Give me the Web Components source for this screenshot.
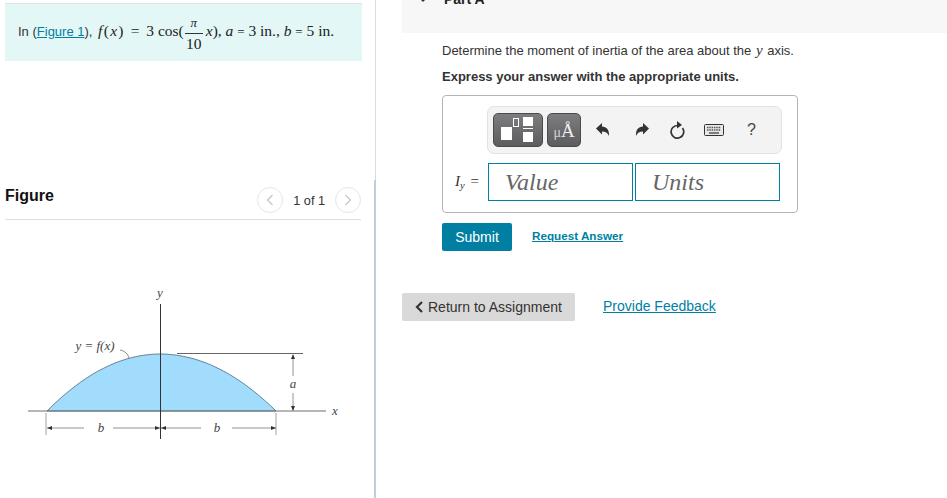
<!DOCTYPE html>
<html>
<head>
<meta charset="utf-8">
<title>Part A</title>
<style>
    html, body { margin: 0; height: 100%; background: #fff; overflow: hidden; }
    body { font-family: "Liberation Sans", Arial, sans-serif; color: #333; }
</style>
</head>
<body>
<problem-page>
    <left-pane slot="left">
        <intro-note>In (<a href="#">Figure 1</a>), <math-text></math-text></intro-note>
        <figure-head></figure-head>
        <figure-drawing></figure-drawing>
    </left-pane>
    <part-pane slot="right"></part-pane>
</problem-page>

<script>
class ProblemPage extends HTMLElement {
    constructor() {
        super();
        this.attachShadow({ mode: "open" });
    }

    connectedCallback() {
        this.shadowRoot.innerHTML = `
            <style>
                :host { display: flex; height: 498px; overflow: hidden; }
                .left { flex: 0 0 374px; }
                .divider {
                    flex: 0 0 2px;
                    background:
                        linear-gradient(90deg, transparent 1px, #d3dde8 1px) top / 100% 180px no-repeat,
                        linear-gradient(#bdd0e2, #bdd0e2) bottom / 100% 318px no-repeat;
                }
                .right { flex: 1; padding-left: 26px; min-width: 0; }
            </style>
            <div class="left"><slot name="left"></slot></div>
            <div class="divider"></div>
            <div class="right"><slot name="right"></slot></div>
        `;
    }
}

class LeftPane extends HTMLElement {
    constructor() {
        super();
        this.attachShadow({ mode: "open" });
    }

    connectedCallback() {
        this.shadowRoot.innerHTML = `
            <style>
                :host { display: block; padding: 3px 0 0 5px; }
            </style>
            <slot></slot>
        `;
    }
}

class IntroNote extends HTMLElement {
    constructor() {
        super();
        this.attachShadow({ mode: "open" });
    }

    connectedCallback() {
        this.shadowRoot.innerHTML = `
            <style>
                :host {
                    display: flex;
                    align-items: center;
                    box-sizing: border-box;
                    height: 58px;
                    width: 357px;
                    padding: 0 0 3px 13px;
                    background: #e3f7f6;
                    border-top: 1px solid #dfe3e8;
                    font-size: 13px;
                    color: #333;
                }
                .line { display: flex; align-items: center; white-space: pre; }
                ::slotted(a) { color: #007fa3; text-decoration: underline; }
            </style>
            <div class="line"><slot></slot></div>
        `;
    }
}

class MathText extends HTMLElement {
    constructor() {
        super();
        this.attachShadow({ mode: "open" });
    }

    connectedCallback() {
        this.shadowRoot.innerHTML = `
            <style>
                :host {
                    display: inline-flex;
                    align-items: center;
                    font-family: "Liberation Serif", "DejaVu Serif", serif;
                    font-size: 15.500px;
                    color: #222;
                    white-space: pre;
                    margin-left: 2px;
                }
                i { font-style: italic; }
                .wide { letter-spacing: 1.300px; }
                .big-eq { margin: 0 3px 0 2px; }
                .eq { font-size: 13px; }
                .frac {
                    display: inline-flex;
                    flex-direction: column;
                    align-items: center;
                    box-sizing: border-box;
                    width: 18px;
                    margin: 0 3px 0 1px;
                    padding-top: 6px;
                }
                .frac i {
                    border-bottom: 1px solid #333;
                    width: 100%;
                    text-align: center;
                    font-size: 13px;
                    line-height: 15px;
                    padding-bottom: 3px;
                }
                .frac span { line-height: 19px; }
            </style>
            <span><span class="wide"><i>f</i>(<i>x</i>)</span> <span class="big-eq">=</span> 3 cos(</span>
            <span class="frac"><i>π</i><span>10</span></span>
            <span><i>x</i>), <i>a</i> <span class="eq">=</span> 3 in., <i>b</i> <span class="eq">=</span> 5 in.</span>
        `;
    }
}

class FigureHead extends HTMLElement {
    constructor() {
        super();
        this.attachShadow({ mode: "open" });
    }

    connectedCallback() {
        this.shadowRoot.innerHTML = `
            <style>
                :host {
                    display: flex;
                    align-items: center;
                    box-sizing: border-box;
                    width: 356px;
                    height: 40px;
                    margin-top: 119px;
                    border-bottom: 1px solid #dcdfe3;
                }
                h2 { margin: 0 0 7px; font-size: 16px; font-weight: bold; color: #111; flex: 1; }
                .pager { display: flex; align-items: center; gap: 10px; font-size: 12.700px; color: #333; margin-top: 1px; }
                .pager .count { margin-top: 2px; }
                .round {
                    width: 26px;
                    height: 26px;
                    box-sizing: border-box;
                    border: 1px solid #e6e6e6;
                    border-radius: 50%;
                    display: flex;
                    align-items: center;
                    justify-content: center;
                }
            </style>
            <h2>Figure</h2>
            <div class="pager">
                <span class="round"><svg width="8" height="12" viewBox="0 0 8 12"><path d="M6.500 1 1.500 6l5 5" fill="none" stroke="#c4c4c4" stroke-width="1.200"/></svg></span>
                <span class="count">1 of 1</span>
                <span class="round"><svg width="8" height="12" viewBox="0 0 8 12"><path d="M1.500 1l5 5-5 5" fill="none" stroke="#c4c4c4" stroke-width="1.200"/></svg></span>
            </div>
        `;
    }
}

class FigureDrawing extends HTMLElement {
    constructor() {
        super();
        this.attachShadow({ mode: "open" });
    }

    // shaded area: parabola-like arch, peak at x = 160, slightly longer on the right
    curve() {
        const pts = [];
        for (let i = -20; i <= 20; i++) {
            const t = i / 20;
            const x = 160 + t * (t < 0 ? 113 : 116);
            const y = 411 - 57 * (1 - t * t);
            pts.push(x.toFixed(1) + " " + y.toFixed(1));
        }
        return "M" + pts.join("L") + "Z";
    }

    connectedCallback() {
        this.shadowRoot.innerHTML = `
            <style>
                :host { display: block; margin: 60px 0 0 15px; }
                svg { display: block; }
                text { font-family: "Liberation Serif", serif; font-style: italic; font-size: 13px; fill: #444; text-anchor: middle; }
            </style>
            <svg width="330" height="160" viewBox="20 280 330 160">
                <path d="${this.curve()}" fill="#a1dcfc" stroke="#4c6a7c" stroke-width="0.800"/>
                <path d="M28 411H326" stroke="#6f6f6f" stroke-width="1.100"/>
                <path d="M160.500 304V439" stroke="#333" stroke-width="1"/>
                <path d="M177 353.500H303" stroke="#555" stroke-width="0.900"/>
                <path d="M293 356V376M293 393V410" stroke="#888" stroke-width="0.900"/>
                <path d="M293 354l-2 5h4zM293 411l-2-5h4z" fill="#333"/>
                <path d="M46 413V435M276 413V435" stroke="#999" stroke-width="0.900"/>
                <path d="M47 428H84M113 428H160M161 428H201M232 428H276" stroke="#777" stroke-width="0.800"/>
                <path d="M47 428l5-2v4zM160 428l-5-2v4zM161 428l5-2v4zM276 428l-5-2v4z" fill="#333"/>
                <path d="M120 350C125 351 128 354 129 358" fill="none" stroke="#555" stroke-width="0.700"/>
                <text x="160" y="297">y</text>
                <text x="95" y="350">y = f(x)</text>
                <text x="293" y="388">a</text>
                <text x="335" y="415">x</text>
                <text x="101" y="432">b</text>
                <text x="217" y="432">b</text>
            </svg>
        `;
    }
}

class PartPane extends HTMLElement {
    constructor() {
        super();
        this.attachShadow({ mode: "open" });
    }

    connectedCallback() {
        this.shadowRoot.innerHTML = `
            <style>
                :host { display: block; }
                .band {
                    display: flex;
                    gap: 17px;
                    height: 33px;
                    padding-left: 17px;
                    background: #f7f7f7;
                    overflow: hidden;
                }
                .band span { font-size: 14px; font-weight: bold; color: #222; margin-top: -8px; line-height: 15px; }
                .band svg { flex: none; }
                .body { padding: 10px 0 0 40px; }
                p { margin: 0; font-size: 13px; line-height: 15px; color: #333; }
                p.how { margin-top: 11px; font-weight: bold; }
                i { font-family: "Liberation Serif", serif; font-size: 15px; margin: 0 1px; }
                .actions { display: flex; align-items: center; gap: 20px; margin-top: 10px; }
                button {
                    border: 0;
                    font-family: inherit;
                    padding: 0;
                    border-radius: 2px;
                }
                .submit { width: 70px; height: 28px; background: #007fa3; color: #fff; font-size: 14px; }
                .req { font-size: 11.700px; font-weight: bold; color: #007fa3; text-decoration: underline; margin-top: -4px; }
                .foot { display: flex; align-items: center; gap: 28px; margin-top: 42px; }
                .back {
                    display: flex;
                    align-items: center;
                    gap: 4px;
                    width: 173px;
                    height: 28px;
                    padding-left: 12px;
                    box-sizing: border-box;
                    background: #d9d9d9;
                    color: #333;
                    font-size: 14px;
                }
                .fb { font-size: 14px; color: #007fa3; text-decoration: underline; margin-top: -2px; }
            </style>
            <div class="band">
                <svg width="8" height="4" viewBox="0 0 8 4"><path d="M2 0h4L4 2z" fill="#333"/></svg>
                <span>Part A</span>
            </div>
            <div class="body">
                <p>Determine the moment of inertia of the area about the <i>y</i> axis.</p>
                <p class="how">Express your answer with the appropriate units.</p>
                <answer-box></answer-box>
                <div class="actions">
                    <button class="submit">Submit</button>
                    <a class="req" href="#">Request Answer</a>
                </div>
            </div>
            <div class="foot">
                <button class="back">
                    <svg width="10" height="12" viewBox="0 0 10 12"><path d="M8 1 3 6l5 5" fill="none" stroke="#333" stroke-width="2.200"/></svg>
                    Return to Assignment
                </button>
                <a class="fb" href="#">Provide Feedback</a>
            </div>
        `;
    }
}

class AnswerBox extends HTMLElement {
    constructor() {
        super();
        this.attachShadow({ mode: "open" });
    }

    connectedCallback() {
        this.shadowRoot.innerHTML = `
            <style>
                :host {
                    display: block;
                    box-sizing: border-box;
                    width: 356px;
                    height: 118px;
                    margin-top: 11px;
                    border: 1px solid #b4b4b4;
                    border-radius: 4px;
                    padding: 10px 0 0 45px;
                }
                .row { display: flex; margin-top: 9px; margin-left: -34px; align-items: center; }
                .label {
                    box-sizing: border-box;
                    width: 34px;
                    padding: 0 0 2px 1px;
                    font-family: "Liberation Serif", serif;
                    font-size: 15px;
                    color: #333;
                    white-space: nowrap;
                }
                .label i { margin-right: 2px; }
                .label sub { font-size: 10.500px; vertical-align: -3px; line-height: 0; }
                .field {
                    box-sizing: border-box;
                    width: 145px;
                    height: 38px;
                    border: 1px solid #007fa3;
                    display: flex;
                    align-items: center;
                    padding-left: 16px;
                    font-family: "Liberation Serif", serif;
                    font-style: italic;
                    font-size: 24px;
                    color: #666;
                }
                .field + .field { margin-left: 2px; }
            </style>
            <answer-toolbar></answer-toolbar>
            <div class="row">
                <span class="label"><i>I<sub>y</sub></i> =</span>
                <div class="field">Value</div>
                <div class="field">Units</div>
            </div>
        `;
    }
}

class AnswerToolbar extends HTMLElement {
    constructor() {
        super();
        this.attachShadow({ mode: "open" });
    }

    connectedCallback() {
        this.shadowRoot.innerHTML = `
            <style>
                :host {
                    display: flex;
                    align-items: center;
                    box-sizing: border-box;
                    width: 295px;
                    height: 48px;
                    margin-left: -1px;
                    padding-left: 5px;
                    background: #f3f3f3;
                    border: 1px solid #e2e2e2;
                    border-radius: 7px;
                }
                .tool {
                    box-sizing: border-box;
                    height: 34px;
                    background: linear-gradient(#7d7d7f, #5c5c5e);
                    border: 1px solid #4a4a4a;
                    border-radius: 5px;
                    display: flex;
                    align-items: center;
                    justify-content: center;
                }
                .t1 { width: 50px; }
                .t2 { width: 34px; margin-left: 4px; color: #eee; font-family: "Liberation Serif", serif; font-size: 19px; align-items: baseline; padding-top: 6px; }
                .t2 small { font-size: 14px; color: #d4d4d4; }
                .icons { display: flex; align-items: center; }
                .icons > * { flex: none; }
                .q { font-size: 16px; color: #444; margin-left: 23px; }
            </style>
            <div class="tool t1">
                <svg width="48" height="32" viewBox="1 1 48 32">
                    <rect x="8" y="14" width="11" height="13" fill="#fff"/>
                    <rect x="20.500" y="5.500" width="5" height="8" fill="none" stroke="#fff" stroke-width="1"/>
                    <rect x="30" y="4" width="10" height="9" fill="#fff"/>
                    <rect x="30" y="15" width="10" height="1" fill="#fff"/>
                    <rect x="30" y="19" width="10" height="10" fill="#fff"/>
                </svg>
            </div>
            <div class="tool t2"><small>μ</small>Å</div>
            <div class="icons">
                <svg style="margin-left:15px" width="14" height="15" viewBox="0 0 14 15"><path d="M0 5.500 6 0v3.500c4.500 0 7.500 3.500 7 9.500-1.300-3.300-3.500-4.500-7-4.500V11.500z" fill="#333"/></svg>
                <svg style="margin-left:25px" width="14" height="15" viewBox="0 0 14 15"><path d="M14 5.500 8 0v3.500C3.500 3.500 .5 7 1 13c1.300-3.300 3.500-4.500 7-4.500v3z" fill="#333"/></svg>
                <svg style="margin-left:20px" width="17" height="18" viewBox="0 0 17 18"><path d="M8.500 4.500a6.300 6.300 0 1 0 5 2.600" fill="none" stroke="#333" stroke-width="1.700"/><path d="M8 0l5 4-5 3.500z" fill="#333"/></svg>
                <svg style="margin-left:18px" width="20" height="12" viewBox="0 0 20 12"><rect x=".5" y=".5" width="19" height="11" rx="1" fill="#e8e8e8" stroke="#333"/><path d="M3 3.500h14M3 6h14" stroke="#555" stroke-width="1.400" stroke-dasharray="1.500 .8"/><path d="M5 9h10" stroke="#333" stroke-width="1.200"/></svg>
                <span class="q">?</span>
            </div>
        `;
    }
}

customElements.define("problem-page", ProblemPage);
customElements.define("left-pane", LeftPane);
customElements.define("intro-note", IntroNote);
customElements.define("math-text", MathText);
customElements.define("figure-head", FigureHead);
customElements.define("figure-drawing", FigureDrawing);
customElements.define("part-pane", PartPane);
customElements.define("answer-box", AnswerBox);
customElements.define("answer-toolbar", AnswerToolbar);
</script>
</body>
</html>
